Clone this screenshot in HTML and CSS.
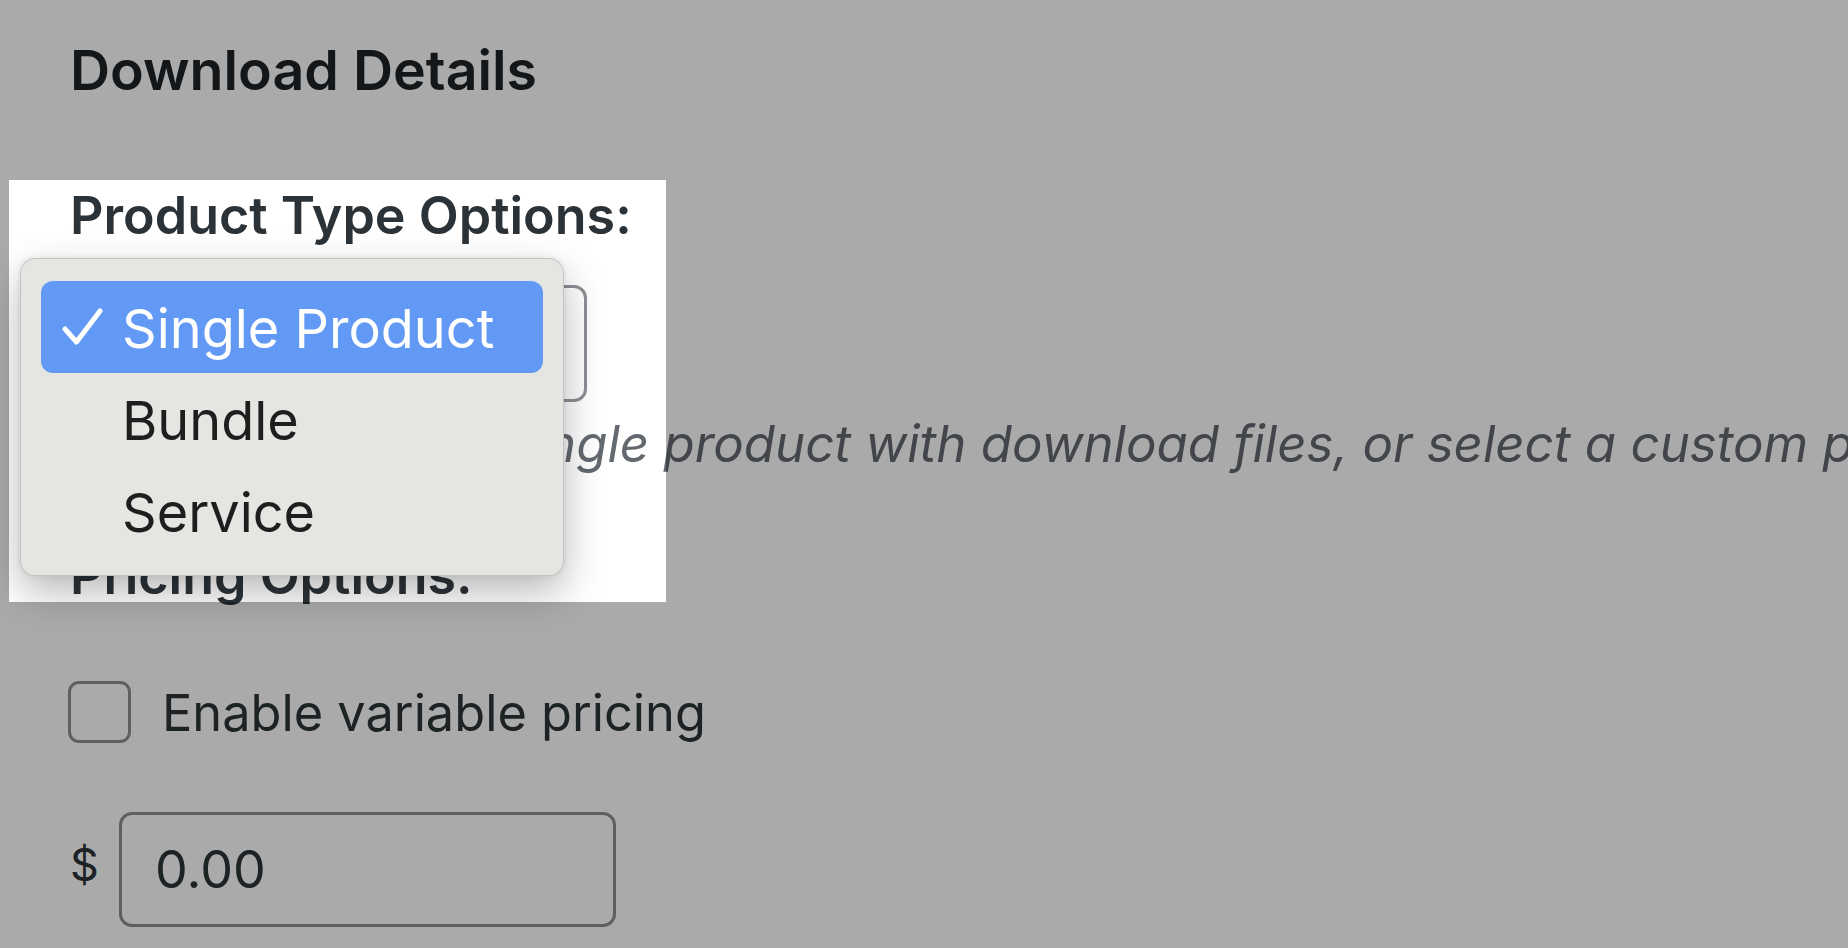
FILE: index.html
```html
<!DOCTYPE html>
<html lang="en">
<head>
<meta charset="utf-8">
<title>Download Details</title>
<link rel="stylesheet" href="styles.css">
</head>
<body>
<main class="page">
  <h2 class="title">Download Details</h2>

  <section class="field">
    <div class="label">Product Type Options:</div>
    <div class="select">Single Product</div>
    <p class="desc">Sell this item as a single product with download files, or select a custom product type.</p>
  </section>

  <section class="field pricing">
    <div class="label">Pricing Options:</div>
    <div class="check-row">
      <span class="checkbox"></span>
      <span class="check-text">Enable variable pricing</span>
    </div>
    <div class="price-row">
      <span class="currency">$</span>
      <div class="input">0.00</div>
    </div>
  </section>
</main>

<div class="spotlight"></div>

<div class="popup">
  <div class="option selected">
    <span class="tick"><svg width="41" height="38" viewBox="0 0 41 38"><path d="M3 21 L14.5 34 L38 3" fill="none" stroke="#ffffff" stroke-width="5" stroke-linecap="round" stroke-linejoin="round"/></svg></span>
    <span>Single Product</span>
  </div>
  <div class="option">
    <span class="tick"></span>
    <span>Bundle</span>
  </div>
  <div class="option">
    <span class="tick"></span>
    <span>Service</span>
  </div>
</div>
</body>
</html>
```

FILE: styles.css
```css
html, body {
  margin: 0;
  padding: 0;
  width: 1848px;
  height: 948px;
  overflow: hidden;
  background: #ffffff;
}

body {
  font-family: "Inter", "Liberation Sans", sans-serif;
  color: #2c3338;
  position: relative;
}

.page {
  padding-left: 70px;
  display: flex;
  flex-direction: column;
}

.title {
  margin: 42px 0 0;
  font-size: 55.5px;
  line-height: 56px;
  font-weight: 600;
  color: #1d2327;
}

.field {
  display: flex;
  flex-direction: column;
}

.label {
  margin-top: 92px;
  font-size: 52px;
  line-height: 52px;
  font-weight: 600;
  color: #2c3338;
  white-space: nowrap;
}

.select {
  margin-top: 43px;
  width: 517px;
  height: 117px;
  box-sizing: border-box;
  border: 3px solid #8c8f94;
  border-radius: 13px;
  padding: 0 30px;
  display: flex;
  align-items: center;
  font-size: 51px;
  color: #2c3338;
}

.desc {
  margin: 16px 0 0;
  font-size: 51px;
  line-height: 51px;
  font-style: italic;
  color: #646970;
  white-space: nowrap;
}

.pricing .label {
  margin-top: 81px;
}

.check-row {
  margin-top: 79px;
  display: flex;
  align-items: center;
  gap: 31px;
}

.checkbox {
  width: 63px;
  height: 62px;
  margin-left: -2px;
  box-sizing: border-box;
  border: 3px solid #8c8f94;
  border-radius: 11px;
  background: #ffffff;
  flex: none;
}

.check-text {
  font-size: 50.5px;
  line-height: 51px;
  color: #2c3338;
  white-space: nowrap;
}

.price-row {
  margin-top: 69px;
  display: flex;
  align-items: flex-start;
  gap: 0;
}

.currency {
  width: 49px;
  font-size: 45px;
  line-height: 46px;
  margin-top: 30px;
  color: #2c3338;
}

.input {
  width: 497px;
  height: 115px;
  box-sizing: border-box;
  border: 3px solid #8c8f94;
  border-radius: 13px;
  padding-left: 33px;
  display: flex;
  align-items: center;
  font-size: 52px;
  color: #2c3338;
}

/* dimming overlay with a highlighted window */
.spotlight {
  position: absolute;
  left: 9px;
  top: 180px;
  width: 657px;
  height: 422px;
  box-shadow: 0 0 0 4000px rgba(0, 0, 0, 0.335);
  pointer-events: none;
  z-index: 1;
}

/* native select popup */
.popup {
  position: absolute;
  left: 20px;
  top: 258px;
  width: 544px;
  height: 318px;
  box-sizing: border-box;
  padding: 22px 20px 19px;
  background: #e5e5e2;
  border: 1px solid rgba(0, 0, 0, 0.14);
  border-radius: 15px;
  box-shadow: 0 16px 40px rgba(0, 0, 0, 0.28), 0 0 6px rgba(0, 0, 0, 0.08);
  z-index: 2;
  display: flex;
  flex-direction: column;
}

.option {
  height: 92px;
  box-sizing: border-box;
  padding: 4px 0 0 21px;
  display: flex;
  align-items: center;
  gap: 19px;
  font-size: 54px;
  line-height: 88px;
  color: #1e1e1e;
  border-radius: 12px;
  white-space: nowrap;
}

.option.selected {
  background: #6299f5;
  color: #ffffff;
}

.tick {
  width: 41px;
  height: 38px;
  flex: none;
  display: flex;
  margin-top: -4px;
}
```
